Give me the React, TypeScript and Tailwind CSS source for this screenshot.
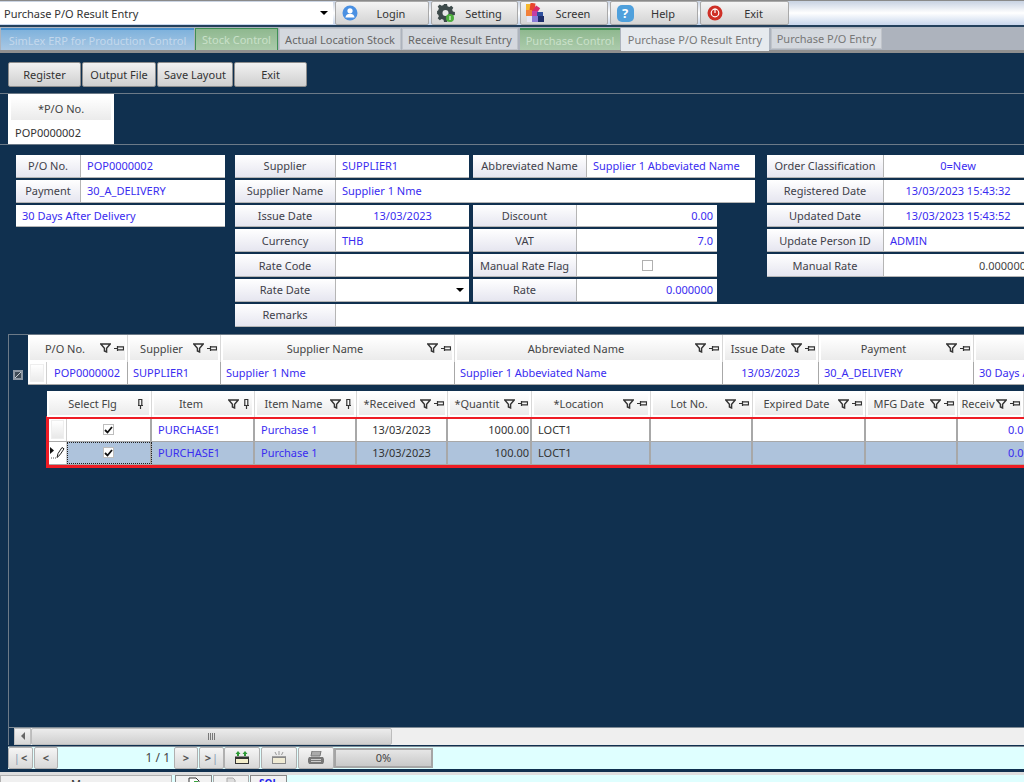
import type { ReactNode } from 'react';

const font = 'font-["Noto_Sans","Open_Sans",sans-serif]';

function LoginIcon() {
  return (
    <svg width="16" height="16" viewBox="0 0 16 16">
      <circle cx="8" cy="8" r="7.5" fill="#4a90e2" />
      <circle cx="8" cy="5.8" r="2.6" fill="#fff" />
      <path d="M3.4 12.4c.5-2.6 2.3-3.6 4.6-3.6s4.100 1 4.600 3.600z" fill="#fff" />
    </svg>
  );
}

function SettingIcon() {
  return (
    <svg width="18" height="20" viewBox="0 0 18 20">
      <path
        d="M7 1h3l.5 2.200 1.800.8 2-1.200 2 2-1.200 2 .8 1.800 2 .5v3l-2 .5-.8 1.800 1.200 2-2 2-2-1.200-1.800.8L10 19H7l-.5-2.200-1.800-.8-2 1.200-2-2 1.200-2-.8-1.800-1-.5v-3l1-.5.8-1.800-1.200-2 2-2 2 1.200 1.800-.8z"
        fill="#3d4a4a"
      />
      <circle cx="8.500" cy="10" r="3" fill="#e8e8e8" />
      <circle cx="13" cy="15" r="4" fill="#4caf3c" />
      <rect x="12.500" y="13" width="1" height="4" fill="#fff" />
    </svg>
  );
}

function ScreenIcon() {
  return (
    <svg width="18" height="20" viewBox="0 0 18 20">
      <rect x="0" y="1" width="5" height="6" fill="#f5b82e" />
      <rect x="4" y="0" width="5" height="8" fill="#e8452e" transform="rotate(8 6 4)" />
      <rect x="8" y="3" width="5" height="7" fill="#d92b6b" transform="rotate(35 10 6)" />
      <rect x="0" y="7" width="6" height="6" fill="#f2803a" />
      <rect x="6" y="8" width="6" height="5" fill="#c43fa5" />
      <rect x="11" y="9" width="6" height="4" fill="#2e4f9e" />
      <rect x="1" y="13" width="5" height="6" fill="#e6e6f5" />
      <rect x="6" y="13" width="6" height="6" fill="#8a7bd6" />
      <rect x="12" y="13" width="6" height="6" fill="#1f2f6b" />
    </svg>
  );
}

function HelpIcon() {
  return (
    <div className="w-[17px] h-[17px] rounded-[5px] bg-[#4fa0dc] text-white text-[13px] font-bold flex items-center justify-center">?</div>
  );
}

function ExitIcon() {
  return (
    <svg width="16" height="16" viewBox="0 0 16 16">
      <circle cx="8" cy="8" r="7.500" fill="#cf3027" />
      <circle cx="8" cy="8" r="3.800" fill="none" stroke="#fff" strokeWidth="1.200" />
      <rect x="7.400" y="3.500" width="1.200" height="4.500" fill="#fff" />
    </svg>
  );
}

function Funnel() {
  return (
    <svg width="11" height="10" viewBox="0 0 11 10" className="shrink-0">
      <path d="M.8 1h9.400L6.600 5.200V9L4.400 8V5.200z" fill="none" stroke="#333" strokeWidth="1.400" />
    </svg>
  );
}

function PinH() {
  return (
    <svg width="10" height="9" viewBox="0 0 10 9" className="shrink-0">
      <path d="M0 4.500h3.500M3.500 2v5M3.500 2.800h6v3h-6" fill="none" stroke="#333" strokeWidth="1.200" />
    </svg>
  );
}

function PinV() {
  return (
    <svg width="9" height="10" viewBox="0 0 9 10" className="shrink-0">
      <path d="M4.500 10V6.500M2 6.500h5M2.800 6.500v-6h3v6" fill="none" stroke="#333" strokeWidth="1.200" />
    </svg>
  );
}

function TopButton({ icon, label, className }: { icon: ReactNode; label: string; className: string }) {
  return (
    <div className={`h-[24px] flex items-center border border-[#a9a9a9] rounded-[2px] bg-gradient-to-b from-[#f4f4f4] to-[#d4d4d4] pl-[4px] text-[11px] text-[#333] ${className}`}>
      <div className="w-[20px] flex justify-center">{icon}</div>
      <div className="flex-1 text-center pr-[6px]">{label}</div>
    </div>
  );
}

function Tab({ label, className }: { label: string; className: string }) {
  return <div className={`h-[22px] flex items-center justify-center text-[11px] whitespace-nowrap ${className}`}>{label}</div>;
}

function ActionButton({ label, className }: { label: string; className: string }) {
  return (
    <div className={`h-[25px] flex items-center justify-center border border-[#8d8d8d] rounded-[2px] bg-gradient-to-b from-[#f2f2f2] to-[#cfcfcf] text-[11px] text-[#333] ${className}`}>
      {label}
    </div>
  );
}

function Label({ children, className }: { children: string; className: string }) {
  return (
    <div className={`flex items-center justify-center whitespace-nowrap bg-gradient-to-b from-white to-[#e6e6f0] border-r border-b border-[#b5b5b5] text-[#3f3f4a] ${className}`}>
      {children}
    </div>
  );
}

function Value({ children, className }: { children?: ReactNode; className: string }) {
  return (
    <div className={`flex items-center whitespace-nowrap bg-white border-b border-[#b5b5b5] px-[6px] text-[#3a2cf0] ${className}`}>
      {children}
    </div>
  );
}

function HeadCell({ width, label, icons = 'hh' }: { width: string; label: string; icons?: 'hh' | 'vv' | 'v' }) {
  return (
    <div className={`h-full shrink-0 bg-white border-r border-[#d8d8d8] p-[2px] ${width}`}>
      <div className="h-full flex items-center bg-gradient-to-b from-white to-[#ebebeb] pr-[1px]">
        <div className="flex-1 min-w-0 text-center whitespace-nowrap text-[#444]">{label}</div>
        <div className={`flex items-center gap-[3px] shrink-0 ${icons === 'v' ? 'pr-[3px]' : ''}`}>
          {icons !== 'v' && <Funnel />}
          {icons === 'hh' ? <PinH /> : <PinV />}
        </div>
      </div>
    </div>
  );
}

function BodyCell({ width, children, className }: { width: string; children?: ReactNode; className?: string }) {
  return (
    <div className={`h-full shrink-0 flex items-center whitespace-nowrap px-[6px] border-r-2 border-[#a8a8a8] ${width} ${className ?? ''}`}>
      {children}
    </div>
  );
}

function Check() {
  return (
    <div className="w-[11px] h-[11px] bg-white border border-[#bdbdbd] flex items-center justify-center">
      <svg width="9" height="8" viewBox="0 0 9 8">
        <path d="M1 4l2.500 2.500L8 1" fill="none" stroke="#111" strokeWidth="1.800" />
      </svg>
    </div>
  );
}

function DetailRow({ selected, first }: { selected?: boolean; first: ReactNode }) {
  const blue = 'text-[#3a2cf0]';
  const dark = 'text-[#333]';
  return (
    <div className={`h-[23px] shrink-0 flex border-b border-[#a8a8a8] ${selected ? 'bg-[#aec3dc]' : 'bg-white'}`}>
      <div className="w-[18px] h-full shrink-0 bg-white flex items-center justify-center border-r border-[#d0d0d0]">{first}</div>
      <div className={`w-[85px] h-full shrink-0 flex items-center justify-center border-r-2 border-[#a8a8a8] ${selected ? 'outline-1 outline-dotted -outline-offset-1 outline-[#222]' : ''}`}>
        <Check />
      </div>
      <BodyCell width="w-[103px]" className={blue}>PURCHASE1</BodyCell>
      <BodyCell width="w-[102px]" className={blue}>Purchase 1</BodyCell>
      <BodyCell width="w-[91px]" className={`justify-center ${dark}`}>13/03/2023</BodyCell>
      <BodyCell width="w-[84px]" className={`justify-end !px-[1px] ${dark}`}>{selected ? '100.00' : '1000.00'}</BodyCell>
      <BodyCell width="w-[119px]" className={dark}>LOCT1</BodyCell>
      <BodyCell width="w-[102px]" />
      <BodyCell width="w-[113px]" />
      <BodyCell width="w-[92px]" />
      <div className="w-[66px] h-full shrink-0 flex items-center pl-[50px] whitespace-nowrap text-[#3a2cf0]">0.00</div>
    </div>
  );
}

function NavButton({ children, className }: { children: ReactNode; className: string }) {
  return (
    <div className={`h-[22px] shrink-0 flex items-center justify-center border border-[#b0b0b0] rounded-[2px] bg-gradient-to-b from-[#f5f5f5] to-[#d8d8d8] text-[#555] text-[11px] font-bold ${className}`}>
      {children}
    </div>
  );
}

export default function App() {
  return (
    <div className={`w-[1024px] h-[782px] overflow-hidden flex flex-col bg-[#10304f] text-[11px] leading-none ${font}`}>
      {/* top bar */}
      <div className="h-[27px] shrink-0 flex items-center gap-[2px] bg-gradient-to-b from-[#c8d2e2] via-white to-[#c8d6ec] border-t border-[#8a8a8a] border-b-2 border-b-[#23405c]">
        <div className="w-[333px] h-[22px] shrink-0 flex items-center justify-between bg-white px-[4px] text-[#333]">
          <span>Purchase P/O Result Entry</span>
          <span className="w-0 h-0 mr-[1px] border-x-[4px] border-x-transparent border-t-[4px] border-t-black" />
        </div>
        <TopButton icon={<LoginIcon />} label="Login" className="w-[94px]" />
        <TopButton icon={<SettingIcon />} label="Setting" className="w-[87px]" />
        <TopButton icon={<ScreenIcon />} label="Screen" className="w-[88px]" />
        <TopButton icon={<HelpIcon />} label="Help" className="w-[88px]" />
        <TopButton icon={<ExitIcon />} label="Exit" className="w-[89px]" />
      </div>

      {/* tabs */}
      <div className="h-[26px] shrink-0 flex items-start gap-[1px] pl-[1px] pt-[1px] bg-[#adb3bd] border-b-[3px] border-[#8f8f8f]">
        <Tab label="SimLex ERP for Production Control" className="w-[193px] bg-gradient-to-b from-[#7fb2dc] to-[#a9c8e4] border-t-2 border-[#4a90cc] text-[#c3d8ec]" />
        <Tab label="Stock Control" className="w-[83px] bg-gradient-to-b from-[#8fb88f] to-[#abcbab] border-t border-x border-[#3f8f55] text-[#c9e0c9]" />
        <Tab label="Actual Location Stock" className="w-[122px] bg-[#d4d8de] border border-[#c0c4ca] text-[#666]" />
        <Tab label="Receive Result Entry" className="w-[116px] bg-[#d4d8de] border border-[#c0c4ca] text-[#666] mr-[1px]" />
        <Tab label="Purchase Control" className="w-[100px] bg-gradient-to-b from-[#8fb88f] to-[#abcbab] border-t-2 border-[#3f8f55] text-[#c9e0c9]" />
        <Tab label="Purchase P/O Result Entry" className="w-[148px] h-[23px] bg-[#e6eaee] text-[#777]" />
        <Tab label="Purchase P/O Entry" className="w-[111px] ml-[1px] !h-[21px] bg-[#d4d8de] border border-[#c0c4ca] text-[#777]" />
      </div>

      {/* main */}
      <div className="flex-1 min-h-0 flex flex-col">
        <div className="flex gap-[1px] pl-[8px] pt-[9px]">
          <ActionButton label="Register" className="w-[73px]" />
          <ActionButton label="Output File" className="w-[74px]" />
          <ActionButton label="Save Layout" className="w-[76px]" />
          <ActionButton label="Exit" className="w-[73px]" />
        </div>

        <div className="mt-[6px] border-t border-[#6c7a88]" />
        <div className="ml-[8px] w-[106px] bg-white">
          <div className="h-[26px] p-[3px] pb-0">
            <div className="h-full flex items-center justify-center bg-gradient-to-b from-white to-[#ebebeb] text-[#444]">*P/O No.</div>
          </div>
          <div className="h-[24px] flex items-center px-[7px] text-[#333]">POP0000002</div>
        </div>
        <div className="border-t border-[#6c7a88]" />

        {/* form */}
        <div className="mt-[10px] pl-[16px] grid grid-cols-[65px_144px_10px_101px_133px_4px_104px_10px_130px_38px_12px_117px_148px] grid-rows-[repeat(7,22.800px)] gap-y-[2px]">
          <Label className="col-[1/2] row-[1]">P/O No.</Label>
          <Value className="col-[2/3] row-[1]">POP0000002</Value>
          <Label className="col-[1/2] row-[2]">Payment</Label>
          <Value className="col-[2/3] row-[2]">30_A_DELIVERY</Value>
          <Value className="col-[1/3] row-[3]">30 Days After Delivery</Value>

          <Label className="col-[4/5] row-[1]">Supplier</Label>
          <Value className="col-[5/6] row-[1]">SUPPLIER1</Value>
          <Label className="col-[4/5] row-[2]">Supplier Name</Label>
          <Value className="col-[5/11] row-[2]">Supplier 1 Nme</Value>
          <Label className="col-[4/5] row-[3]">Issue Date</Label>
          <Value className="col-[5/6] row-[3] justify-center">13/03/2023</Value>
          <Label className="col-[4/5] row-[4]">Currency</Label>
          <Value className="col-[5/6] row-[4]">THB</Value>
          <Label className="col-[4/5] row-[5]">Rate Code</Label>
          <Value className="col-[5/6] row-[5]" />
          <Label className="col-[4/5] row-[6]">Rate Date</Label>
          <Value className="col-[5/6] row-[6] justify-end !pr-[5px]">
            <span className="w-0 h-0 border-x-[4px] border-x-transparent border-t-[4px] border-t-black" />
          </Value>
          <Label className="col-[4/5] row-[7]">Remarks</Label>
          <Value className="col-[5/14] row-[7]" />

          <Label className="col-[7/9] row-[1]">Abbreviated Name</Label>
          <Value className="col-[9/11] row-[1]">Supplier 1 Abbeviated Name</Value>
          <Label className="col-[7/8] row-[3]">Discount</Label>
          <Value className="col-[8/10] row-[3] justify-end !pr-[4px]">0.00</Value>
          <Label className="col-[7/8] row-[4]">VAT</Label>
          <Value className="col-[8/10] row-[4] justify-end !pr-[4px]">7.0</Value>
          <Label className="col-[7/8] row-[5]">Manual Rate Flag</Label>
          <Value className="col-[8/10] row-[5] justify-center">
            <span className="w-[11px] h-[11px] border border-[#b0b0b0]" />
          </Value>
          <Label className="col-[7/8] row-[6]">Rate</Label>
          <Value className="col-[8/10] row-[6] justify-end !pr-[4px]">0.000000</Value>

          <Label className="col-[12/13] row-[1]">Order Classification</Label>
          <Value className="col-[13/14] row-[1] justify-center">0=New</Value>
          <Label className="col-[12/13] row-[2]">Registered Date</Label>
          <Value className="col-[13/14] row-[2] justify-center">13/03/2023 15:43:32</Value>
          <Label className="col-[12/13] row-[3]">Updated Date</Label>
          <Value className="col-[13/14] row-[3] justify-center">13/03/2023 15:43:52</Value>
          <Label className="col-[12/13] row-[4]">Update Person ID</Label>
          <Value className="col-[13/14] row-[4]">ADMIN</Value>
          <Label className="col-[12/13] row-[5]">Manual Rate</Label>
          <Value className="col-[13/14] row-[5] justify-end !text-[#444]">0.000000</Value>
        </div>

        {/* grid pane */}
        <div className="mt-[7px] ml-[8px] h-[411px] shrink-0 flex flex-col border-l border-t border-[#6c7a88] overflow-hidden">
          <div className="pl-[19px] relative">
            <div className="h-[27px] w-[1100px] flex">
              <HeadCell width="w-[100px]" label="P/O No." />
              <HeadCell width="w-[93px]" label="Supplier" />
              <HeadCell width="w-[234px]" label="Supplier Name" />
              <HeadCell width="w-[268px]" label="Abbreviated Name" />
              <HeadCell width="w-[96px]" label="Issue Date" />
              <HeadCell width="w-[155px]" label="Payment" />
              <HeadCell width="w-[160px]" label="" />
            </div>
            <div className="h-[23px] w-[1100px] flex bg-white border-b border-[#a8a8a8]">
              <div className="w-[19px] h-full shrink-0 p-[2px] border-r border-[#d0d0d0]">
                <div className="h-full bg-gradient-to-b from-white to-[#ebebeb] border border-[#eee]" />
              </div>
              <BodyCell width="w-[81px]" className="text-[#3a2cf0] justify-center !border-r">POP0000002</BodyCell>
              <BodyCell width="w-[93px]" className="text-[#3a2cf0] !px-[5px] !border-r">SUPPLIER1</BodyCell>
              <BodyCell width="w-[234px]" className="text-[#3a2cf0] !px-[5px] !border-r">Supplier 1 Nme</BodyCell>
              <BodyCell width="w-[268px]" className="text-[#3a2cf0] !px-[5px] !border-r">Supplier 1 Abbeviated Name</BodyCell>
              <BodyCell width="w-[96px]" className="text-[#3a2cf0] justify-center !border-r">13/03/2023</BodyCell>
              <BodyCell width="w-[155px]" className="text-[#3a2cf0] !px-[5px] !border-r">30_A_DELIVERY</BodyCell>
              <BodyCell width="w-[100px]" className="text-[#3a2cf0] !px-[5px] !border-r-0">30 Days After Delivery</BodyCell>
            </div>
            {/* expander */}
            <svg width="10" height="10" viewBox="0 0 10 10" className="absolute left-[4px] top-[35px]">
              <rect width="10" height="10" fill="#8d97a3" />
              <rect x="2" y="2" width="6" height="6" fill="#3f4a55" />
              <path d="M2 8l6-6" stroke="#c8ced4" strokeWidth="1" />
            </svg>
          </div>

          {/* detail */}
          <div className="mt-[6px] ml-[38px] w-[1100px]">
            <div className="h-[26px] flex bg-white">
              <HeadCell width="w-[105px]" label="Select Flg" icons="v" />
              <HeadCell width="w-[103px]" label="Item" icons="vv" />
              <HeadCell width="w-[102px]" label="Item Name" icons="vv" />
              <HeadCell width="w-[91px]" label="*Received" />
              <HeadCell width="w-[84px]" label="*Quantit" />
              <HeadCell width="w-[119px]" label="*Location" />
              <HeadCell width="w-[102px]" label="Lot No." />
              <HeadCell width="w-[113px]" label="Expired Date" />
              <HeadCell width="w-[92px]" label="MFG Date" />
              <HeadCell width="w-[66px]" label="Receiv" />
            </div>
            <div className="-ml-[1px] border-[3px] border-[#ee1c25] border-r-0 h-[52px] -mt-[1px] overflow-hidden">
              <DetailRow
                first={<div className="w-[13px] h-[19px] bg-gradient-to-b from-white to-[#e8e8e8] border border-[#eee]" />}
              />
              <DetailRow
                selected
                first={
                  <svg width="15" height="13" viewBox="0 0 15 13">
                    <path d="M0 1l4 3.500L0 8z" fill="#111" />
                    <path d="M7 11.500l1-4 4-6 2 1.300-4 6z" fill="none" stroke="#222" strokeWidth="1" />
                    <path d="M1 12h5" stroke="#555" strokeDasharray="1 1" />
                  </svg>
                }
              />
            </div>
          </div>

          <div className="flex-1" />

          {/* horizontal scroll */}
          <div className="h-[18px] shrink-0 flex bg-[#efefef] border-t border-[#7f8b96]">
            <div className="w-[5px] h-full bg-[#10304f]" />
            <div className="w-[17px] h-full flex items-center justify-center bg-gradient-to-b from-[#f2f2f2] to-[#d8d8d8] border border-[#c0c0c0]">
              <span className="w-0 h-0 border-y-[4px] border-y-transparent border-r-[4px] border-r-[#666]" />
            </div>
            <div className="w-[361px] h-full flex items-center justify-center gap-[1px] bg-gradient-to-b from-[#ececec] to-[#cfcfcf] border border-[#bcbcbc] rounded-[2px]">
              <span className="w-[1px] h-[7px] bg-[#777]" />
              <span className="w-[1px] h-[7px] bg-[#777]" />
              <span className="w-[1px] h-[7px] bg-[#777]" />
              <span className="w-[1px] h-[7px] bg-[#777]" />
            </div>
          </div>
        </div>

        {/* navigator */}
        <div className="ml-[8px] mt-[1px] border-t border-[#7f8b96] h-[23px] shrink-0 flex bg-[#dfffff] overflow-hidden">
          <NavButton className="w-[25px]"><span className="text-[#8a9ab0] font-normal mr-[1px]">|</span>&lt;</NavButton>
          <NavButton className="w-[24px] ml-[1px]">&lt;</NavButton>
          <div className="w-[116px] h-[22px] shrink-0 flex items-center justify-end pr-[4px] bg-[#dfffff] text-[12px] text-[#444]">1 / 1</div>
          <NavButton className="w-[24px]">&gt;</NavButton>
          <NavButton className="w-[25px] ml-[1px]">&gt;<span className="text-[#8a9ab0] font-normal ml-[1px]">|</span></NavButton>
          <NavButton className="w-[36px]">
            <svg width="16" height="14" viewBox="0 0 16 14">
              <path d="M4 0l2.500 3H5v2H3V3H1.500zM11 0l2.500 3H12v2h-2V3H8.500z" fill="#2d9a35" />
              <rect x="1.500" y="6" width="13" height="6.500" fill="#f4eecb" stroke="#333" />
              <rect x="1" y="6" width="14" height="2" fill="#333" />
            </svg>
          </NavButton>
          <NavButton className="w-[36px] ml-[1px]">
            <svg width="16" height="14" viewBox="0 0 16 14">
              <path d="M8 0v4M4 1l1.500 3M12 1l-1.500 3" stroke="#999" />
              <rect x="1.500" y="6" width="13" height="6.500" fill="#f0ebd4" stroke="#888" />
              <rect x="1" y="5.500" width="14" height="1.500" fill="#888" />
            </svg>
          </NavButton>
          <NavButton className="w-[36px] ml-[1px]">
            <svg width="18" height="14" viewBox="0 0 18 14">
              <path d="M5 0h9l-1 5H4z" fill="#aaa" stroke="#777" />
              <path d="M2 6h14l1 2v3l-1 2H2l-1-2V8z" fill="#777" />
              <rect x="4" y="8" width="10" height="1" fill="#ccc" />
              <rect x="4" y="10" width="10" height="1" fill="#ccc" />
            </svg>
          </NavButton>
          <div className="w-[99px] h-[20px] shrink-0 mt-[1px] flex items-center justify-center border-2 border-[#a5a5a5] bg-gradient-to-b from-[#e6e6e6] to-[#c9c9c9] text-[#444] text-[11px]">0%</div>
        </div>
        <div className="h-[4px] shrink-0" />
      </div>

      {/* bottom strip */}
      <div className="h-[10px] shrink-0 flex items-start bg-[#dfffff] border-t-[3px] border-[#dedede] overflow-hidden">
        <div className="w-[172px] h-[10px] shrink-0 border border-[#b0b0b0] bg-[#f0f0f0] text-center text-[#333] pt-[2px]">Menu</div>
        <div className="w-[37px] h-[10px] shrink-0 ml-[3px] border border-[#888] bg-[#f2f2f2] flex justify-center pt-[1px]">
          <svg width="12" height="8" viewBox="0 0 12 8">
            <path d="M1 8V1h7l3 3v4" fill="#fff" stroke="#333" />
            <path d="M6 4h4v4H6z" fill="#3aa33f" />
          </svg>
        </div>
        <div className="w-[36px] h-[10px] shrink-0 ml-[1px] border border-[#aaa] bg-[#f2f2f2] flex justify-center pt-[1px]">
          <svg width="12" height="8" viewBox="0 0 12 8">
            <path d="M2 8V1h6l2 2v5" fill="#ddd" stroke="#aaa" />
          </svg>
        </div>
        <div className="w-[37px] h-[10px] shrink-0 ml-[1px] border border-[#888] bg-[#f2f2f2] text-center text-[#2222ee] text-[10px] font-bold pt-[2px]">SQL</div>
      </div>
    </div>
  );
}
